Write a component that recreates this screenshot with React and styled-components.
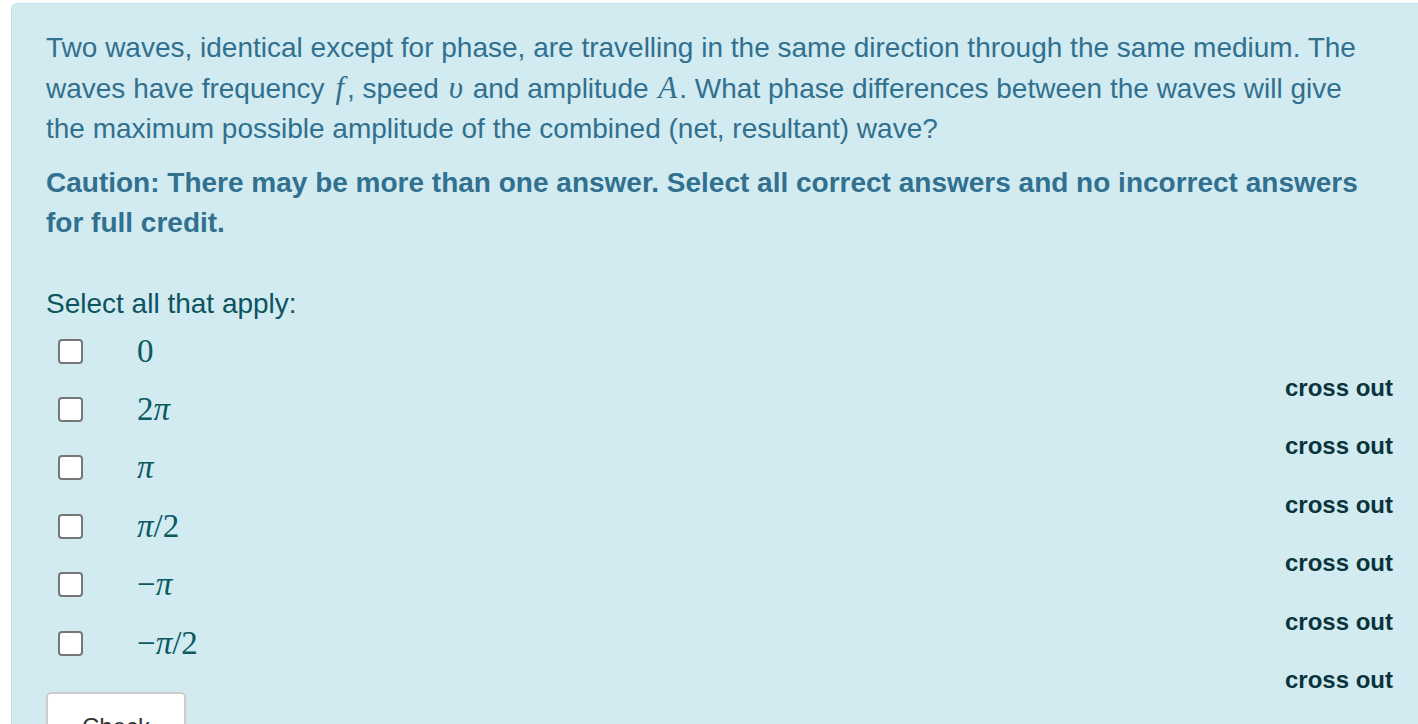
import React from "react";
import styled, { createGlobalStyle } from "styled-components";

const GlobalStyle = createGlobalStyle`
  html, body {
    margin: 0;
    padding: 0;
    background: #ffffff;
    overflow: hidden;
  }
  body {
    font-family: "Liberation Sans", Arial, sans-serif;
  }
`;

const Panel = styled.div`
  box-sizing: border-box;
  width: 1418px;
  margin: 3px 0 0 11px;
  padding: 24px 35px 40px 34px;
  background: #d1ebf1;
  border: 1px solid #bee5eb;
  border-radius: 6px;
  min-height: 760px;
`;

const Question = styled.p`
  margin: 0;
  max-width: 1325px;
  font-size: 28px;
  line-height: 40px;
  color: #31708f;
`;

const Caution = styled.p`
  margin: 14px 0 0 0;
  max-width: 1325px;
  font-size: 28px;
  line-height: 40px;
  font-weight: bold;
  color: #31708f;
`;

const Prompt = styled.div`
  margin-top: 41px;
  font-size: 28px;
  line-height: 40px;
  color: #0c5460;
`;

const MathVar = styled.span`
  font-family: "Liberation Serif", "Times New Roman", serif;
  font-style: italic;
  font-size: 31px;
  padding: 0 ${(p) => p.$pad || 2}px;
`;

const Options = styled.div`
  display: flex;
  flex-direction: column;
  margin-top: -2px;
`;

const OptionRow = styled.div`
  position: relative;
  height: 58.4px;
  display: flex;
  align-items: center;
`;

const Box = styled.span`
  box-sizing: border-box;
  width: 25px;
  height: 25px;
  margin-left: 12px;
  border: 2px solid #767676;
  border-radius: 4px;
  background: #ffffff;
  flex-shrink: 0;
`;

const Label = styled.span`
  margin-left: 54px;
  font-family: "Liberation Serif", "Times New Roman", serif;
  font-size: 33px;
  color: #0b5961;
  line-height: 1;
`;

const Pi = styled.i`
  font-style: italic;
`;

const CrossOut = styled.span`
  position: absolute;
  right: 0;
  top: 52px;
  font-size: 24px;
  line-height: 28px;
  font-weight: bold;
  color: #0a343b;
`;

const CheckButton = styled.button`
  margin-top: 20px;
  height: 58px;
  padding: 12px 34px 0 34px;
  font-family: "Liberation Sans", Arial, sans-serif;
  font-size: 24px;
  color: #333333;
  background: #ffffff;
  border: 2px solid #cccccc;
  border-radius: 5px;
  vertical-align: top;
`;

const options = [
  <>0</>,
  <>2<Pi>π</Pi></>,
  <><Pi>π</Pi></>,
  <><Pi>π</Pi>/2</>,
  <>−<Pi>π</Pi></>,
  <>−<Pi>π</Pi>/2</>,
];

export default function App() {
  return (
    <>
      <GlobalStyle />
      <Panel>
        <Question>
          Two waves, identical except for phase, are travelling in the same
          direction through the same medium. The waves have frequency{" "}
          <MathVar $pad={3}>f</MathVar>, speed <MathVar>υ</MathVar> and
          amplitude <MathVar>A</MathVar>. What phase differences between the
          waves will give the maximum possible amplitude of the combined (net,
          resultant) wave?
        </Question>
        <Caution>
          Caution: There may be more than one answer. Select all correct
          answers and no incorrect answers for full credit.
        </Caution>
        <Prompt>Select all that apply:</Prompt>
        <Options>
          {options.map((o, i) => (
            <OptionRow key={i}>
              <Box />
              <Label>{o}</Label>
              <CrossOut>cross out</CrossOut>
            </OptionRow>
          ))}
        </Options>
        <CheckButton>Check</CheckButton>
      </Panel>
    </>
  );
}
